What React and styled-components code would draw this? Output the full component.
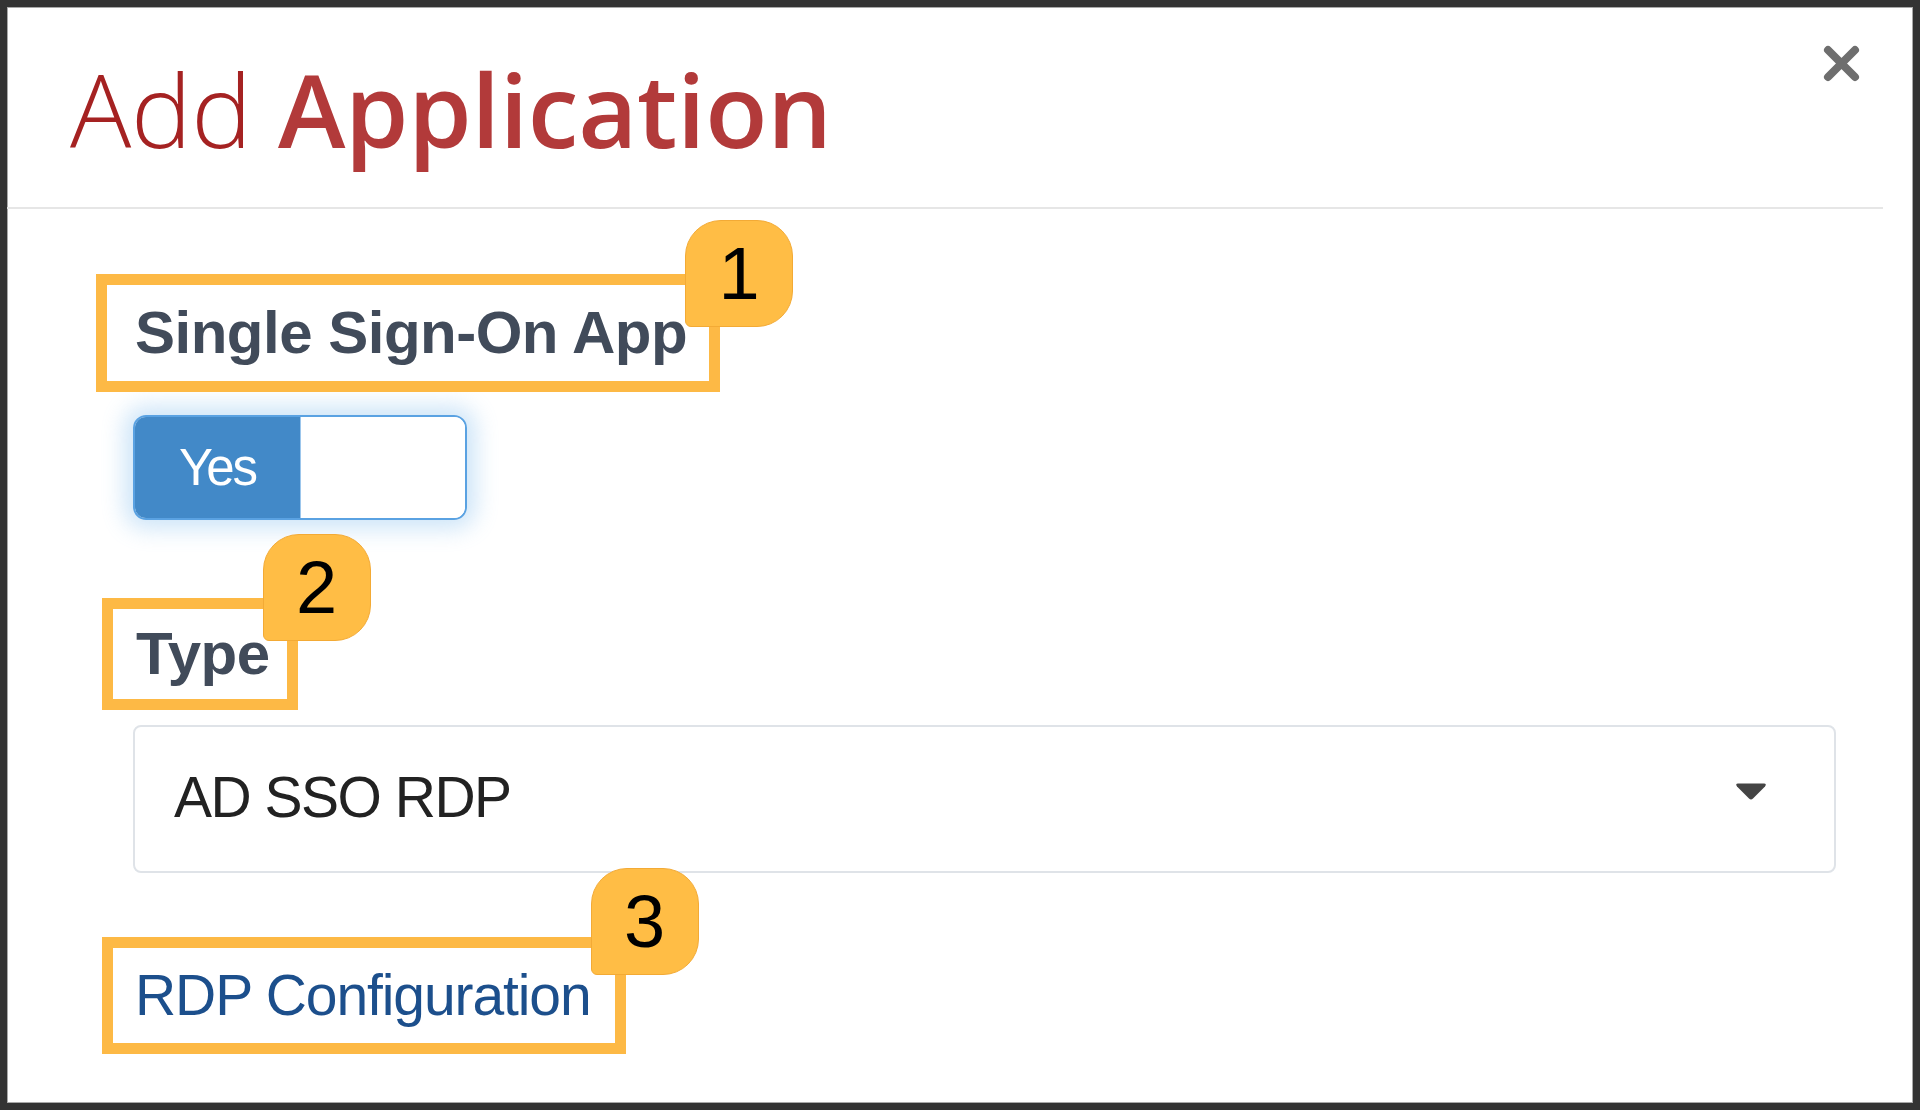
import React from "react";
import styled, { createGlobalStyle } from "styled-components";

const GlobalStyle = createGlobalStyle`
  html, body {
    margin:0;
    padding:0;
    background:#fff;
  }
  body {
    font-family:"Liberation Sans", Arial, sans-serif;
  }
  * {
    box-sizing:border-box;
  }
`

const Frame = styled.div`
width:1920px;
height:1110px;
border:7px solid #333;
box-shadow:inset 0 0 0 1px #a8a8a8;
background:#fff;
display:flex;
flex-direction:column;
overflow:hidden;
`

const Header = styled.header`
display:flex;
justify-content:space-between;
align-items:flex-start;
margin-right:30px;
padding:51px 23px 47px 63px;
border-bottom:2px solid #e6e6e6;
`

const Title = styled.h1`
margin:0;
font-family:"Open Sans", sans-serif;
font-size:102px;
line-height:1;
font-weight:300;
letter-spacing:-0.3px;
color:#a52222;
strong {
  font-weight:600;
  color:#b23a3a;
}
`

const Close = styled.button`
border:0;
background:none;
padding:0;
margin-top:-13px;
width:37px;
height:37px;
display:flex;
cursor:pointer;
`

const Body = styled.div`
display:flex;
flex-direction:column;
align-items:flex-start;
padding:65px 0 0 95px;
`

const Callout = styled.div`
position:relative;
display:inline-flex;
align-items:center;
height:${p => p.$h}px;
margin-top:${p => p.$mt || 0}px;
margin-left:${p => p.$ml || 0}px;
padding:0 ${p => p.$pr}px 0 ${p => p.$pl}px;
border:11px solid #fdb945;
`

const Badge = styled.span`
position:absolute;
right:-84px;
top:${p => p.$top}px;
width:108px;
height:107px;
background:#ffbd45;
border:1.5px solid #f3aa35;
border-radius:36px 36px 36px 6px;
display:flex;
align-items:center;
justify-content:center;
font-size:74px;
line-height:1;
color:#000;
`

const Label = styled.label`
font-size:60px;
font-weight:700;
letter-spacing:-0.5px;
line-height:1;
color:#414b5a;
`

const Link = styled.a`
font-size:57px;
letter-spacing:-1.1px;
line-height:1;
color:#1c4f8c;
text-decoration:none;
`

const Switch = styled.div`
margin:23px 0 0 31px;
width:334px;
height:105px;
display:flex;
border:2px solid #5aa2e2;
border-radius:13px;
overflow:hidden;
box-shadow:0 0 22px 9px rgba(102,175,233,0.32);
`

const SwitchOn = styled.span`
width:165px;
background:#4289c8;
color:#fff;
display:flex;
align-items:center;
justify-content:center;
font-size:51px;
letter-spacing:-2px;
`

const SwitchOff = styled.span`
flex:1;
background:#fff;
border-left:1px solid #9cc6ec;
`

const Select = styled.div`
margin:15px 0 0 31px;
width:1703px;
height:148px;
display:flex;
align-items:center;
justify-content:space-between;
padding:0 67px 4px 39px;
border:2px solid #dfe3e8;
border-radius:8px;
font-size:57px;
letter-spacing:-1.5px;
color:#222;
svg {
  margin-bottom:12px;
}
`

export default function App() {
  return (
    <>
      <GlobalStyle />
      <Frame>
        <Header>
          <Title>Add <strong>Application</strong></Title>
          <Close aria-label="Close">
            <svg width="37" height="37" viewBox="0 0 37 37">
              <path d="M5 5 L32 32 M32 5 L5 32" stroke="#6e6e6e" strokeWidth="8" strokeLinecap="round" />
            </svg>
          </Close>
        </Header>
        <Body>
          <Callout $h={118} $ml={-6} $pl={28} $pr={22}>
            <Label>Single Sign-On App</Label>
            <Badge $top={-65}>1</Badge>
          </Callout>
          <Switch>
            <SwitchOn>Yes</SwitchOn>
            <SwitchOff />
          </Switch>
          <Callout $h={112} $mt={78} $pl={23} $pr={17}>
            <Label>Type</Label>
            <Badge $top={-75}>2</Badge>
          </Callout>
          <Select>
            <span>AD SSO RDP</span>
            <svg width="32" height="19" viewBox="0 0 32 19">
              <path d="M3 1.5 H29 Q32 1.5 30 4.5 L18 16.5 Q16 18.5 14 16.5 L2 4.5 Q0 1.5 3 1.5 Z" fill="#444" />
            </svg>
          </Select>
          <Callout $h={117} $mt={64} $pl={22} $pr={24}>
            <Link href="#">RDP Configuration</Link>
            <Badge $top={-80}>3</Badge>
          </Callout>
        </Body>
      </Frame>
    </>
  );
}
